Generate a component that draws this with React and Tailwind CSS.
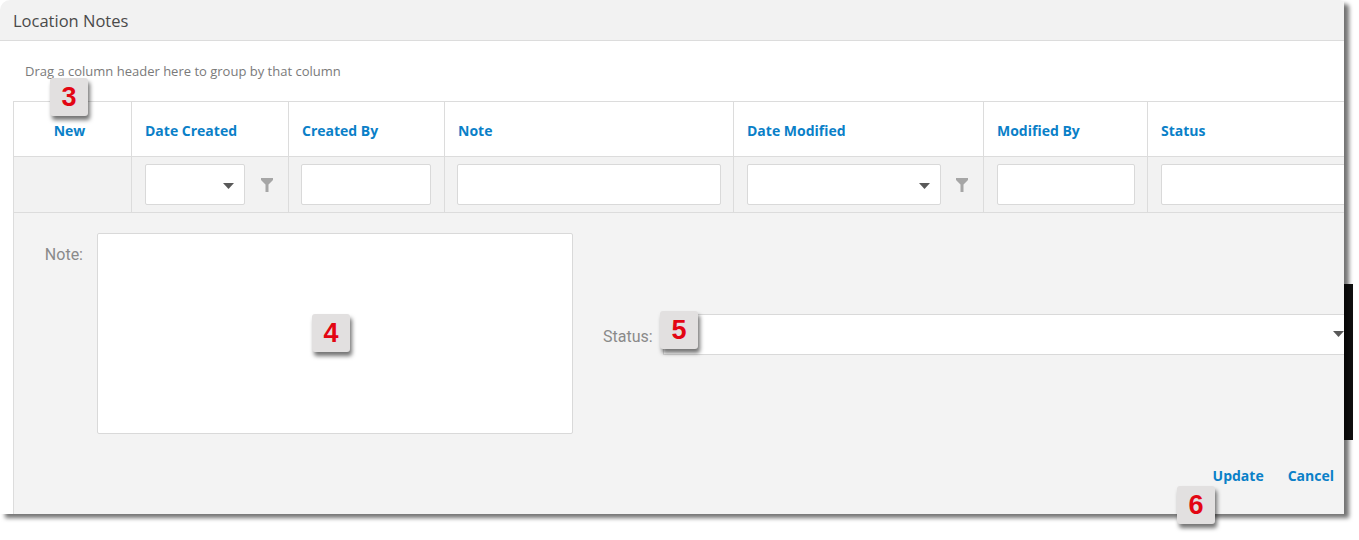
import React from 'react';

const font = { fontFamily: '"Open Sans", "Noto Sans", sans-serif' };

const columns = [
    { key: 'new', label: 'New', center: true },
    { key: 'created', label: 'Date Created' },
    { key: 'createdBy', label: 'Created By' },
    { key: 'note', label: 'Note' },
    { key: 'modified', label: 'Date Modified' },
    { key: 'modifiedBy', label: 'Modified By' },
    { key: 'status', label: 'Status' },
];

function Caret() {
    return (
        <svg width="11" height="6" viewBox="0 0 11 6" className="shrink-0">
            <path d="M0 0 L11 0 L5.5 6 Z" fill="#595959" />
        </svg>
    );
}

function FilterIcon() {
    return (
        <svg width="12" height="14" viewBox="0 0 12 14" className="shrink-0">
            <path d="M0 0 H12 V2 L7.5 6.5 V14 H4.5 V6.5 L0 2 Z" fill="#a6a6a6" />
        </svg>
    );
}

function Badge({ n, className }) {
    return (
        <div
            className={`absolute z-20 w-[38px] h-[38px] rounded-[3px] bg-[#e2e0e0] shadow-[2px_4px_4px_rgba(0,0,0,0.55)] flex items-center justify-center text-[27px] font-bold text-[#e30613] ${className}`}
            style={{ fontFamily: '"Liberation Sans", Arial, sans-serif' }}
        >
            {n}
        </div>
    );
}

export default function App() {
    return (
        <div className="relative w-[1359px] h-[540px] bg-white overflow-hidden" style={font}>
            {/* dark object behind dialog on the right */}
            <div className="absolute left-[1340px] top-[284px] w-[13px] h-[156px] bg-[#111]" />

            {/* Dialog */}
            <div className="relative z-10 w-[1344px] h-[514px] flex flex-col bg-white rounded-tl-[10px] rounded-tr-[4px] overflow-hidden shadow-[5px_4px_4px_rgba(0,0,0,0.55)]">
                {/* Title */}
                <div className="h-[41px] shrink-0 flex items-center pl-[13px] pt-[2px] bg-[#f2f2f2] border-b border-[#dcdcdc] text-[16.5px] text-[#4a4a4a]">
                    Location Notes
                </div>

                {/* Group panel */}
                <div className="h-[60px] shrink-0 flex items-center pl-[25px] pt-[2px] text-[13px] text-[#7a7a7a]">
                    Drag a column header here to group by that column
                </div>

                {/* Grid */}
                <div className="ml-[13px] flex-1 flex flex-col border-l border-t border-[#dcdcdc] min-w-0">
                    {/* Header row */}
                    <div className="grid grid-cols-[117px_157px_156px_289px_250px_164px_220px] h-[55px] shrink-0 border-b border-[#dcdcdc]">
                        {columns.map((c, i) => (
                            <div
                                key={c.key}
                                className={`flex items-center pt-[2px] text-[14px] font-bold text-[#0a80c8] ${i > 0 ? 'border-l border-[#dcdcdc] pl-[13px]' : 'justify-center pr-[6px]'}`}
                            >
                                {c.label}
                            </div>
                        ))}
                    </div>

                    {/* Filter row */}
                    <div className="grid grid-cols-[117px_157px_156px_289px_250px_164px_220px] h-[56px] shrink-0 bg-[#f2f2f2] border-b border-[#dcdcdc]">
                        <div />
                        <div className="border-l border-[#dcdcdc] flex items-center pl-[13px] gap-[16px]">
                            <div className="w-[100px] h-[41px] bg-white border border-[#d9d9d9] rounded-[2px] flex items-center justify-end pr-[10px] pt-[2px]">
                                <Caret />
                            </div>
                            <FilterIcon />
                        </div>
                        <div className="border-l border-[#dcdcdc] flex items-center pl-[12px]">
                            <div className="w-[130px] h-[41px] bg-white border border-[#d9d9d9] rounded-[2px]" />
                        </div>
                        <div className="border-l border-[#dcdcdc] flex items-center pl-[12px]">
                            <div className="w-[264px] h-[41px] bg-white border border-[#d9d9d9] rounded-[2px]" />
                        </div>
                        <div className="border-l border-[#dcdcdc] flex items-center pl-[13px] gap-[15px]">
                            <div className="w-[194px] h-[41px] bg-white border border-[#d9d9d9] rounded-[2px] flex items-center justify-end pr-[10px] pt-[2px]">
                                <Caret />
                            </div>
                            <FilterIcon />
                        </div>
                        <div className="border-l border-[#dcdcdc] flex items-center pl-[13px]">
                            <div className="w-[138px] h-[41px] bg-white border border-[#d9d9d9] rounded-[2px]" />
                        </div>
                        <div className="border-l border-[#dcdcdc] flex items-center pl-[13px]">
                            <div className="w-[200px] h-[41px] bg-white border border-[#d9d9d9] rounded-[2px]" />
                        </div>
                    </div>

                    {/* Edit form */}
                    <div className="flex-1 bg-[#f3f3f3] flex flex-col">
                        <div className="flex pt-[20px]">
                            <div
                                className="w-[83px] shrink-0 pr-[14px] pt-[10px] text-right text-[16px] text-[#8a8a8a]"
                                style={{ fontFamily: 'Roboto, sans-serif' }}
                            >
                                Note:
                            </div>
                            <div className="w-[476px] shrink-0 h-[201px] bg-white border border-[#d9d9d9] rounded-[2px]" />
                            <div className="flex shrink-0 items-center ml-[30px] pt-[1px]">
                                <span
                                    className="text-[16px] text-[#8a8a8a] w-[60px] shrink-0 pt-[6px]"
                                    style={{ fontFamily: 'Roboto, sans-serif' }}
                                >
                                    Status:
                                </span>
                                <div className="w-[700px] shrink-0 h-[41px] bg-white border-y border-l border-[#d9d9d9] flex items-center pl-[669px]">
                                    <Caret />
                                </div>
                            </div>
                        </div>
                        <div className="flex justify-end items-center gap-[24px] pr-[10px] mt-[31px] text-[14px] font-bold text-[#0a80c8]">
                            <span>Update</span>
                            <span>Cancel</span>
                        </div>
                    </div>
                </div>
            </div>

            <Badge n="3" className="left-[50px] top-[78px]" />
            <Badge n="4" className="left-[312px] top-[314px]" />
            <Badge n="5" className="left-[660px] top-[311px]" />
            <Badge n="6" className="left-[1177px] top-[486px]" />
        </div>
    );
}
